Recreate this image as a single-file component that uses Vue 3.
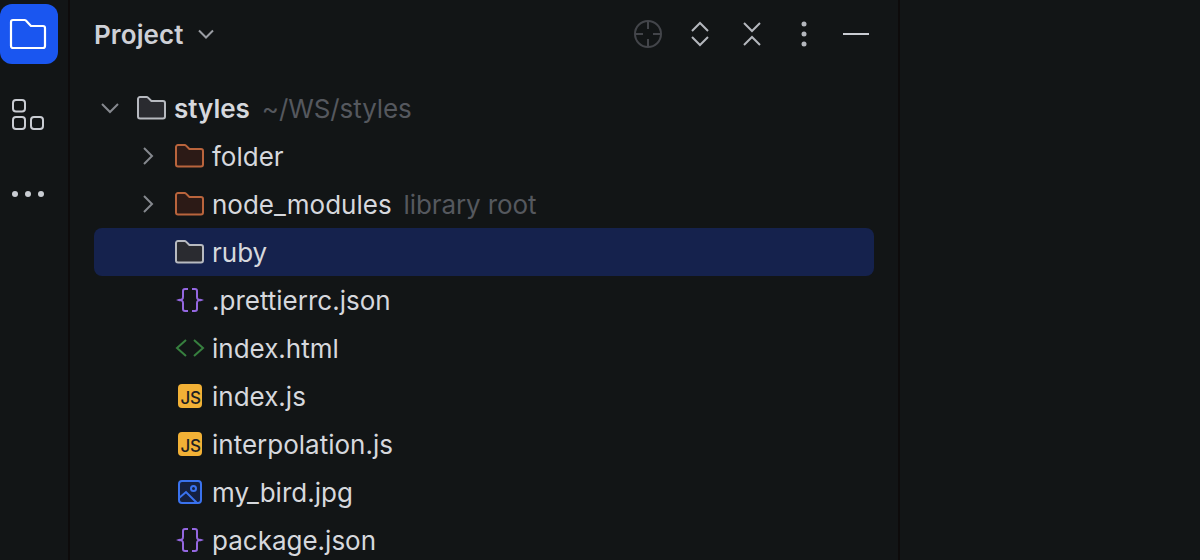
<template>
  <div class="ide">
    <nav class="rail">
      <button class="rail-btn active">
        <svg width="40" height="40" viewBox="0 0 40 40" fill="none">
          <path d="M4 6h11.500a2 2 0 0 1 1.400.6L22 12h12a2 2 0 0 1 2 2v18a2 2 0 0 1-2 2H4a2 2 0 0 1-2-2V8a2 2 0 0 1 2-2z" stroke="#fff" stroke-width="2.200" stroke-linejoin="round" />
        </svg>
      </button>
      <button class="rail-btn">
        <svg width="40" height="40" viewBox="0 0 40 40" fill="none" stroke="#c9ccd2" stroke-width="2">
          <rect x="4" y="4" width="12" height="11.500" rx="3" />
          <rect x="4" y="21" width="12" height="12" rx="3" />
          <rect x="22" y="21" width="12" height="12" rx="3" />
        </svg>
      </button>
      <button class="rail-btn">
        <svg width="40" height="40" viewBox="0 0 40 40" fill="#c9ccd2">
          <circle cx="6" cy="20" r="3" />
          <circle cx="19" cy="20" r="3" />
          <circle cx="32" cy="20" r="3" />
        </svg>
      </button>
    </nav>

    <section class="panel">
      <header class="panel-head">
        <span class="panel-title">Project</span>
        <svg class="title-chevron" width="20" height="20" viewBox="0 0 20 20" fill="none">
          <path d="M3 6.500l7 7 7-7" stroke="#9a9da3" stroke-width="2" />
        </svg>
        <div class="tools">
          <svg width="32" height="32" viewBox="0 0 32 32" fill="none" stroke="#43454a" stroke-width="2">
            <circle cx="16" cy="16" r="13" />
            <path d="M16 3v8M16 21v8M3 16h8M21 16h8" />
          </svg>
          <svg width="32" height="32" viewBox="0 0 32 32" fill="none" stroke="#b4b7bd" stroke-width="2">
            <path d="M8 13l8-8 8 8M8 19l8 8 8-8" />
          </svg>
          <svg width="32" height="32" viewBox="0 0 32 32" fill="none" stroke="#b4b7bd" stroke-width="2">
            <path d="M8 5l8 8 8-8M8 27l8-8 8 8" />
          </svg>
          <svg width="32" height="32" viewBox="0 0 32 32" fill="#b4b7bd">
            <circle cx="16" cy="6" r="2.500" />
            <circle cx="16" cy="16" r="2.500" />
            <circle cx="16" cy="26" r="2.500" />
          </svg>
          <svg width="32" height="32" viewBox="0 0 32 32" fill="none" stroke="#c9ccd2" stroke-width="2">
            <path d="M3 16h26" />
          </svg>
        </div>
      </header>

      <div class="tree">
        <div
          v-for="row in rows"
          :key="row.name"
          class="row"
          :class="{ selected: row.selected }"
          :style="{ paddingLeft: row.depth * 38 + 'px' }"
        >
          <span class="chevron">
            <svg v-if="row.arrow" width="32" height="32" viewBox="0 0 32 32" fill="none" stroke="#85888e" stroke-width="2">
              <path v-if="row.arrow === 'open'" d="M8 12l8 8 8-8" />
              <path v-else d="M12 8l8 8-8 8" />
            </svg>
          </span>

          <svg class="icon" width="32" height="32" viewBox="0 0 16 16" fill="none">
            <template v-if="row.icon === 'folder' || row.icon === 'lib'">
              <path
                d="M2.500 2.500h2.800a1 1 0 0 1 .7.3l1.700 1.700h5.800a1 1 0 0 1 1 1v6.800a1 1 0 0 1-1 1h-11.500a1 1 0 0 1-1-1v-8.800a1 1 0 0 1 1-1z"
                :fill="row.icon === 'lib' ? '#2c1a16' : '#2a2b30'"
                :stroke="row.icon === 'lib' ? '#b9643c' : '#b7bac0'"
              />
            </template>
            <template v-else-if="row.icon === 'json'">
              <path
                d="M7 2.500H5.500a1 1 0 0 0-1 1v3a1.500 1.500 0 0 1-2 1.500 1.500 1.500 0 0 1 2 1.500v3a1 1 0 0 0 1 1H7M9 2.500h1.500a1 1 0 0 1 1 1v3a1.500 1.500 0 0 0 2 1.500 1.500 1.500 0 0 0-2 1.500v3a1 1 0 0 1-1 1H9"
                stroke="#9467e0"
              />
            </template>
            <template v-else-if="row.icon === 'html'">
              <path d="M6 4L1.500 8 6 12M10 4l4.500 4L10 12" stroke="#37803f" />
            </template>
            <template v-else-if="row.icon === 'js'">
              <rect x="2" y="2" width="12" height="12" rx="2" fill="#f2b136" />
              <text x="8.300" y="12" class="js-label">JS</text>
            </template>
            <template v-else>
              <rect x="2.500" y="2.500" width="11" height="11" rx="1.500" fill="#15203f" stroke="#3a72ee" />
              <circle cx="9.750" cy="6.250" r="1.250" stroke="#3a72ee" />
              <path d="M2.500 11L6 8l5.500 5.500" stroke="#3a72ee" />
            </template>
          </svg>

          <span class="name" :class="{ strong: row.strong }">{{ row.name }}</span>
          <span v-if="row.hint" class="hint">{{ row.hint }}</span>
        </div>
      </div>
    </section>
  </div>
</template>

<script setup>
const rows = [
  { name: 'styles', depth: 0, arrow: 'open', icon: 'folder', strong: true, hint: '~/WS/styles' },
  { name: 'folder', depth: 1, arrow: 'closed', icon: 'lib' },
  { name: 'node_modules', depth: 1, arrow: 'closed', icon: 'lib', hint: 'library root' },
  { name: 'ruby', depth: 1, icon: 'folder', selected: true },
  { name: '.prettierrc.json', depth: 1, icon: 'json' },
  { name: 'index.html', depth: 1, icon: 'html' },
  { name: 'index.js', depth: 1, icon: 'js' },
  { name: 'interpolation.js', depth: 1, icon: 'js' },
  { name: 'my_bird.jpg', depth: 1, icon: 'image' },
  { name: 'package.json', depth: 1, icon: 'json' },
]
</script>

<style>
html, body { background: #121516; }
</style>

<style scoped>
.ide {
  display: flex; width: 1200px; height: 560px; overflow: hidden;
  background: #121516; color: #d6d8dd;
  font-family: Inter, "Liberation Sans", sans-serif;
}
.rail {
  flex: 0 0 68px; display: flex; flex-direction: column; align-items: flex-start;
  padding-top: 4px; gap: 18px; border-right: 2px solid #0d0b0b;
}
.rail-btn {
  display: flex; align-items: center; justify-content: center;
  width: 58px; height: 60px; padding: 0; background: none; border: 0;
  border-radius: 12px;
}
.rail-btn:nth-child(2) { margin-top: 4px; }
.rail-btn.active { background: #1a56f0; }
.panel { flex: 0 0 828px; border-right: 2px solid #0d0b0b; }
.panel-head { display: flex; align-items: center; height: 68px; padding: 0 24px; }
.panel-title { font-size: 26px; font-weight: 600; color: #ced0d6; letter-spacing: .1px; }
.title-chevron { margin-left: 12px; }
.tools { display: flex; gap: 20px; margin-left: auto; margin-right: 2px; }
.tree { padding: 16px 24px 0; }
.row {
  display: flex; align-items: center; height: 48px; border-radius: 8px;
  font-size: 26px; white-space: nowrap;
}
.row.selected { background: #15224d; }
.chevron { flex: 0 0 32px; width: 32px; height: 32px; margin-right: 10px; }
.icon { flex: 0 0 32px; margin-right: 6px; }
.name { color: #d6d8dd; }
.name.strong { font-weight: 600; }
.hint { margin-left: 12px; color: #55585e; letter-spacing: -.1px; }
.js-label { font-family: Inter, "Liberation Sans", sans-serif; font-size: 8.500px; font-weight: 500; fill: #1e1f22; text-anchor: middle; letter-spacing: -.2px; }
</style>
